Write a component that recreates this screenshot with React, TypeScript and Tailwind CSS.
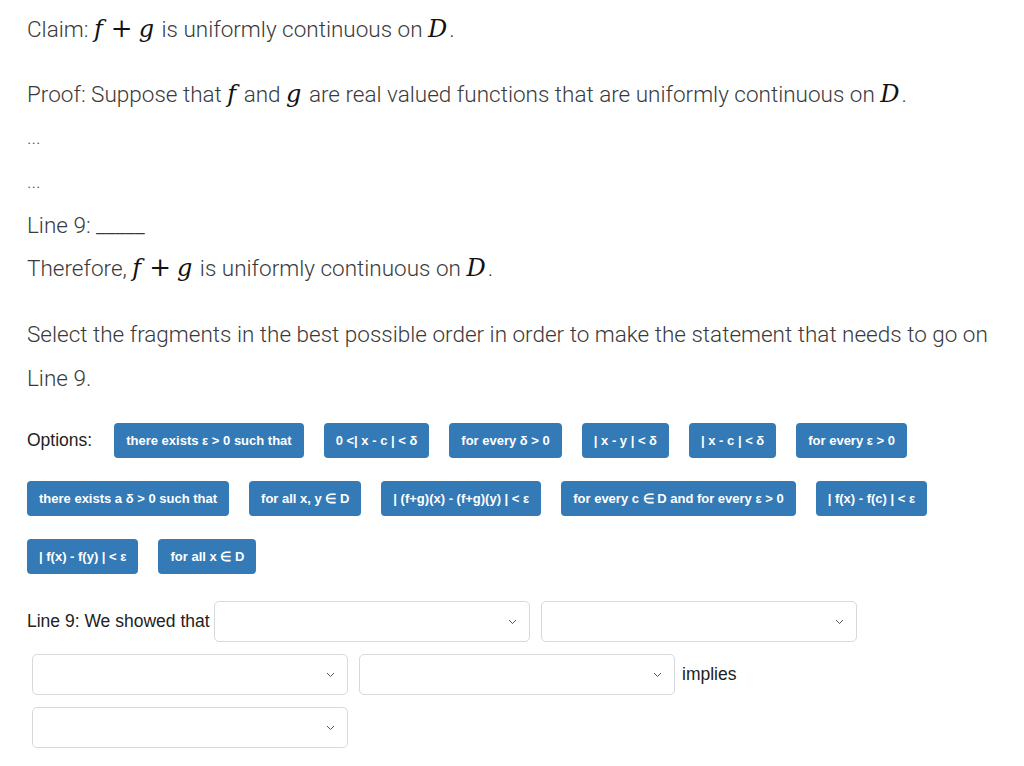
import React from 'react'

const OPTIONS = [
  'there exists ε > 0 such that',
  '0 <| x - c | < δ',
  'for every δ > 0',
  '| x - y | < δ',
  '| x - c | < δ',
  'for every ε > 0',
  'there exists a δ > 0 such that',
  'for all x, y ∈ D',
  '| (f+g)(x) - (f+g)(y) | < ε',
  'for every c ∈ D and for every ε > 0',
  '| f(x) - f(c) | < ε',
  '| f(x) - f(y) | < ε',
  'for all x ∈ D',
]

function M({ children }: { children: React.ReactNode }) {
  return <span className="mr-[2px] font-['DejaVu_Serif',serif] text-[24px] italic text-[#111]">{children}</span>
}

function FPlusG() {
  return (
    <>
      <M>f</M>
      <span className="mx-[6px] font-['DejaVu_Serif',serif] text-[26px] font-light text-[#111]">+</span>
      <M>g</M>
    </>
  )
}

function Select({ className = '' }: { className?: string }) {
  return (
    <div className={`relative mx-[5px] inline-flex h-[41px] w-[316px] items-center justify-end rounded-[5px] border border-[#d7d9dc] bg-white pr-[12px] ${className}`}>
      <svg width="9" height="6" viewBox="0 0 9 6" fill="none">
        <path d="M1 1l3.5 3.5L8 1" stroke="#555" strokeWidth="1" />
      </svg>
    </div>
  )
}

export default function App() {
  return (
    <div className="min-h-[766px] w-[1024px] bg-white pl-[27px] pr-[16px] pt-[6px] font-['Roboto',sans-serif] text-[22.5px] font-light text-[#3a3a3a]">
      <div className="leading-[44px]">
        Claim: <FPlusG /> is uniformly continuous on <M>D</M>.
      </div>
      <div className="mt-[21px] leading-[44px]">
        Proof: Suppose that <M>f</M> and <M>g</M> are real valued functions that are uniformly continuous on <M>D</M>.
      </div>
      <div className="text-[19px] leading-[44px] text-[#555]">...</div>
      <div className="text-[19px] leading-[43px] text-[#555]">...</div>
      <div className="mt-[2px] leading-[41px]">Line 9: _____</div>
      <div className="leading-[43px]">
        Therefore, <FPlusG /> is uniformly continuous on <M>D</M>.
      </div>
      <div className="mt-[22px] leading-[44px]">
        Select the fragments in the best possible order in order to make the statement that needs to go on Line 9.
      </div>

      <div className="mt-[23px] flex flex-wrap items-center gap-x-[20px] gap-y-[23px] font-['Liberation_Sans',Arial,sans-serif]">
        <span className="mr-[2px] text-[17.5px] font-normal text-[#222]">Options:</span>
        {OPTIONS.map(o => (
          <button
            key={o}
            type="button"
            className="h-[35px] rounded-[4px] bg-[#337ab7] px-[12px] text-[13px] font-bold text-white"
          >
            {o}
          </button>
        ))}
      </div>

      <div className="mt-[27px] flex flex-col gap-[12px] font-['Liberation_Sans',Arial,sans-serif] text-[17.5px] font-normal text-[#222]">
        <div className="flex items-center">
          <span>Line 9: We showed that</span>
          <Select className="ml-[4px]" />
          <Select className="ml-[6px]" />
        </div>
        <div className="flex items-center">
          <Select />
          <Select className="ml-[6px]" />
          <span className="ml-[2px]">implies</span>
        </div>
        <div className="flex items-center">
          <Select />
        </div>
      </div>
    </div>
  )
}
